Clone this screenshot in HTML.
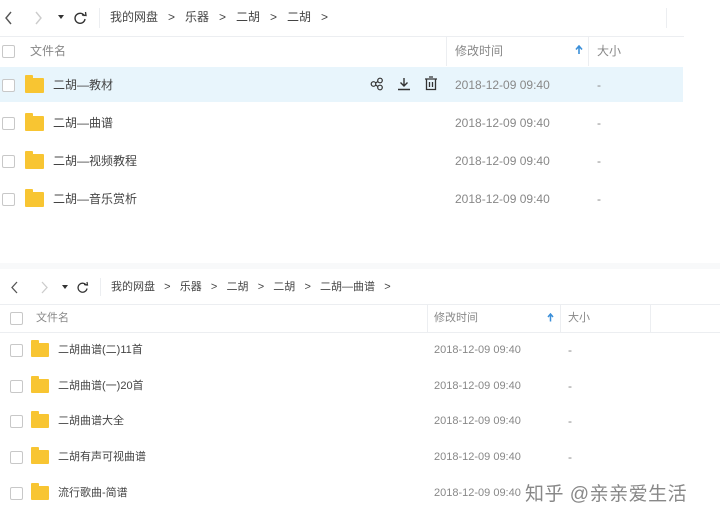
<!DOCTYPE html>
<html><head><meta charset="utf-8"><style>
body{margin:0;width:720px;height:530px;background:#fff;position:relative;overflow:hidden;font-family:"Liberation Sans","Noto Sans CJK SC",sans-serif;color:#444;font-size:12px}
.a{position:absolute;white-space:nowrap;line-height:14px}
.cb{position:absolute;width:11px;height:11px;border:1px solid #c8c8c8;border-radius:2px;background:#fff}
.fd{position:absolute;width:19px;height:15px;background:#f8c532;border-radius:1px}
.fd:before{content:"";position:absolute;left:0;top:-3px;width:8px;height:4px;background:#f8c532;border-radius:1px 1px 0 0}
.g{color:#888}
.l{position:absolute;background:#eceef1}
svg{position:absolute}
</style></head><body>
<svg style="left:4px;top:11px" width="10" height="14"><path d="M7 1 L2 7 L7 13" fill="none" stroke="#555" stroke-width="1.4"/></svg>
<svg style="left:33px;top:11px" width="10" height="14"><path d="M3 1 L8 7 L3 13" fill="none" stroke="#ccc" stroke-width="1.4"/></svg>
<svg style="left:58px;top:15px" width="7" height="5"><path d="M0 0 L6 0 L3 4Z" fill="#333"/></svg>
<svg style="left:73px;top:11px" width="14" height="14"><path d="M11.5 5 A5 5 0 1 0 12 8" fill="none" stroke="#333" stroke-width="1.4"/><path d="M9 4 L13 4.5 L12.5 1" fill="none" stroke="#333" stroke-width="1.3"/></svg>
<div class="l" style="left:99px;top:8px;width:1px;height:20px"></div>
<div class="a" style="left:110px;top:10px;color:#444">我的网盘 &nbsp;&nbsp;&gt; &nbsp;&nbsp;乐器 &nbsp;&nbsp;&gt; &nbsp;&nbsp;二胡 &nbsp;&nbsp;&gt; &nbsp;&nbsp;二胡 &nbsp;&nbsp;&gt;</div>
<div class="l" style="left:666px;top:8px;width:1px;height:20px"></div>
<div class="l" style="left:0;top:36px;width:684px;height:1px"></div>
<div class="l" style="left:446px;top:37px;width:1px;height:29px"></div>
<div class="l" style="left:588px;top:37px;width:1px;height:29px"></div>
<div class="cb" style="left:2px;top:45px"></div>
<div class="a g" style="left:30px;top:44px">文件名</div>
<div class="a g" style="left:455px;top:44px">修改时间</div>
<svg style="left:575px;top:45px" width="8" height="10"><path d="M4 9 V2 M1 4.5 L4 1 L7 4.5" fill="none" stroke="#3b8fd9" stroke-width="1.6"/></svg>
<div class="a g" style="left:597px;top:44px">大小</div>
<div class="a" style="left:0;top:67px;width:683px;height:35px;background:#e8f5fc"></div>
<svg style="left:370px;top:77px" width="14" height="14"><circle cx="3.5" cy="7" r="2.3" fill="none" stroke="#333" stroke-width="1.2"/><circle cx="10" cy="3.5" r="2.3" fill="none" stroke="#333" stroke-width="1.2"/><circle cx="10" cy="10.5" r="2.3" fill="none" stroke="#333" stroke-width="1.2"/><path d="M5.5 6 L8 4.5 M5.5 8 L8 9.5" stroke="#333" stroke-width="1.2"/></svg>
<svg style="left:397px;top:77px" width="14" height="14"><path d="M7 1 V9 M3.5 5.5 L7 9 L10.5 5.5 M1 12.5 H13" fill="none" stroke="#333" stroke-width="1.4"/></svg>
<svg style="left:424px;top:76px" width="14" height="15"><path d="M1 3 H13 M5 1 H9 M2.5 3 V13.5 H11.5 V3 M5.5 6 V11 M8.5 6 V11" fill="none" stroke="#333" stroke-width="1.3"/></svg>

<div class="cb" style="left:2px;top:79px"></div><div class="fd" style="left:25px;top:78px"></div>
<div class="a" style="left:53px;top:78px">二胡—教材</div><div class="a g" style="left:455px;top:78px">2018-12-09 09:40</div><div class="a g" style="left:597px;top:78px">-</div>
<div class="cb" style="left:2px;top:117px"></div><div class="fd" style="left:25px;top:116px"></div>
<div class="a" style="left:53px;top:116px">二胡—曲谱</div><div class="a g" style="left:455px;top:116px">2018-12-09 09:40</div><div class="a g" style="left:597px;top:116px">-</div>
<div class="cb" style="left:2px;top:155px"></div><div class="fd" style="left:25px;top:154px"></div>
<div class="a" style="left:53px;top:154px">二胡—视频教程</div><div class="a g" style="left:455px;top:154px">2018-12-09 09:40</div><div class="a g" style="left:597px;top:154px">-</div>
<div class="cb" style="left:2px;top:193px"></div><div class="fd" style="left:25px;top:192px"></div>
<div class="a" style="left:53px;top:192px">二胡—音乐赏析</div><div class="a g" style="left:455px;top:192px">2018-12-09 09:40</div><div class="a g" style="left:597px;top:192px">-</div>

<div class="a" style="left:0;top:263px;width:720px;height:6px;background:#f8f9fa"></div>
<svg style="left:10px;top:281px" width="10" height="13"><path d="M7 1 L2 6.5 L7 12" fill="none" stroke="#555" stroke-width="1.3"/></svg>
<svg style="left:39px;top:281px" width="10" height="13"><path d="M3 1 L8 6.5 L3 12" fill="none" stroke="#ccc" stroke-width="1.3"/></svg>
<svg style="left:62px;top:285px" width="6" height="5"><path d="M0 0 L6 0 L3 4Z" fill="#333"/></svg>
<svg style="left:76px;top:281px" width="13" height="13"><path d="M10.5 4.5 A4.5 4.5 0 1 0 11 7.5" fill="none" stroke="#333" stroke-width="1.3"/><path d="M8 3.5 L11.5 4 L11 1" fill="none" stroke="#333" stroke-width="1.2"/></svg>
<div class="l" style="left:100px;top:278px;width:1px;height:18px"></div>
<div class="a" style="left:111px;top:280px;font-size:11px">我的网盘 &nbsp;&nbsp;&gt; &nbsp;&nbsp;乐器 &nbsp;&nbsp;&gt; &nbsp;&nbsp;二胡 &nbsp;&nbsp;&gt; &nbsp;&nbsp;二胡 &nbsp;&nbsp;&gt; &nbsp;&nbsp;二胡—曲谱 &nbsp;&nbsp;&gt;</div>
<div class="l" style="left:0;top:304px;width:720px;height:1px"></div>
<div class="l" style="left:0;top:332px;width:720px;height:1px"></div>
<div class="l" style="left:427px;top:305px;width:1px;height:27px"></div>
<div class="l" style="left:560px;top:305px;width:1px;height:27px"></div>
<div class="l" style="left:650px;top:305px;width:1px;height:27px"></div>
<div class="cb" style="left:10px;top:312px"></div>
<div class="a g" style="left:36px;top:311px;font-size:11px">文件名</div>
<div class="a g" style="left:434px;top:311px;font-size:11px">修改时间</div>
<svg style="left:547px;top:313px" width="7" height="9"><path d="M3.5 8.5 V2 M1 4 L3.5 1 L6 4" fill="none" stroke="#3b8fd9" stroke-width="1.5"/></svg>
<div class="a g" style="left:568px;top:311px;font-size:11px">大小</div>

<div class="cb" style="left:10px;top:344px"></div><div class="fd" style="left:31px;top:343px;width:18px;height:14px"></div>
<div class="a" style="left:58px;top:343px;font-size:11px">二胡曲谱(二)11首</div><div class="a g" style="left:434px;top:343px;font-size:11px">2018-12-09 09:40</div><div class="a g" style="left:568px;top:343px">-</div>
<div class="cb" style="left:10px;top:380px"></div><div class="fd" style="left:31px;top:379px;width:18px;height:14px"></div>
<div class="a" style="left:58px;top:379px;font-size:11px">二胡曲谱(一)20首</div><div class="a g" style="left:434px;top:379px;font-size:11px">2018-12-09 09:40</div><div class="a g" style="left:568px;top:379px">-</div>
<div class="cb" style="left:10px;top:415px"></div><div class="fd" style="left:31px;top:414px;width:18px;height:14px"></div>
<div class="a" style="left:58px;top:414px;font-size:11px">二胡曲谱大全</div><div class="a g" style="left:434px;top:414px;font-size:11px">2018-12-09 09:40</div><div class="a g" style="left:568px;top:414px">-</div>
<div class="cb" style="left:10px;top:451px"></div><div class="fd" style="left:31px;top:450px;width:18px;height:14px"></div>
<div class="a" style="left:58px;top:450px;font-size:11px">二胡有声可视曲谱</div><div class="a g" style="left:434px;top:450px;font-size:11px">2018-12-09 09:40</div><div class="a g" style="left:568px;top:450px">-</div>
<div class="cb" style="left:10px;top:487px"></div><div class="fd" style="left:31px;top:486px;width:18px;height:14px"></div>
<div class="a" style="left:58px;top:486px;font-size:11px">流行歌曲-简谱</div><div class="a g" style="left:434px;top:486px;font-size:11px">2018-12-09 09:40</div>
<div class="a" style="left:525px;top:484px;font-size:19px;line-height:22px;color:#888;letter-spacing:0.5px">知乎 @亲亲爱生活</div>
</body></html>
